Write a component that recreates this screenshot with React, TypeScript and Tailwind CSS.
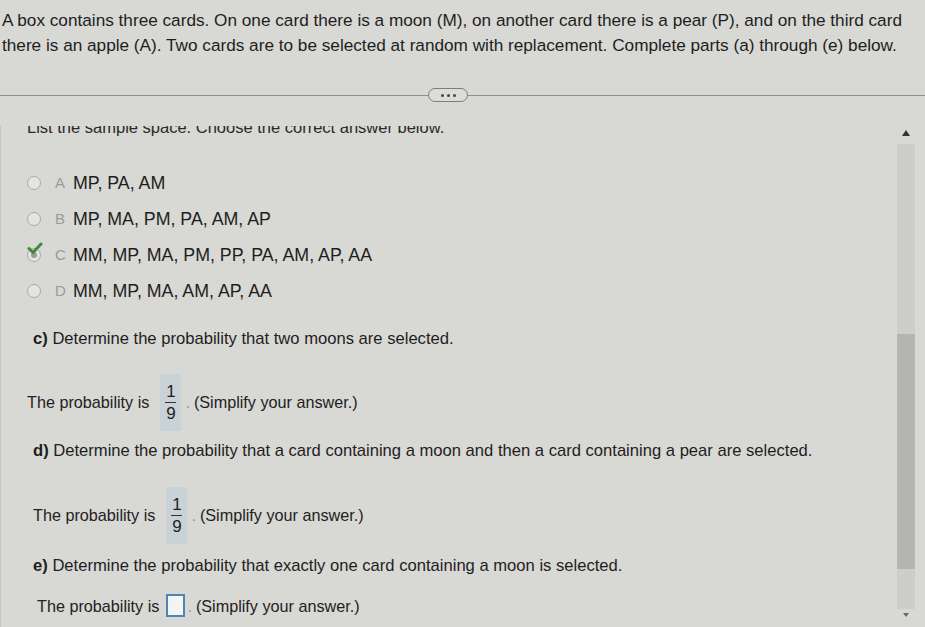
const OPTIONS = [
  { key: 'A', text: 'MP, PA, AM' },
  { key: 'B', text: 'MP, MA, PM, PA, AM, AP' },
  { key: 'C', text: 'MM, MP, MA, PM, PP, PA, AM, AP, AA', correct: true },
  { key: 'D', text: 'MM, MP, MA, AM, AP, AA' },
];

function Radio({ checked }: { checked?: boolean }) {
  return (
    <span className="relative inline-flex h-[14px] w-[14px] shrink-0 items-center justify-center rounded-full border border-[#a9a9a6] bg-[#e4e4e0]">
      {checked && <span className="h-[6px] w-[6px] rounded-full bg-[#9a9a97]" />}
      {checked && (
        <svg className="absolute -left-[1px] -top-[7px]" width="16" height="14" viewBox="0 0 16 14">
          <path d="M2 6.5 L6 10.5 L14 2" fill="none" stroke="#3f8a3a" strokeWidth="3" strokeLinecap="round" strokeLinejoin="round" />
        </svg>
      )}
    </span>
  );
}

function Fraction({ num, den }: { num: string; den: string }) {
  return (
    <span className="ml-[11px] mr-[4px] inline-flex w-[21px] flex-col items-center bg-[#c9d2d6] py-[7px] text-[17px] leading-[21px]">
      <span>{num}</span>
      <span className="h-px w-[11px] bg-[#333]" />
      <span>{den}</span>
    </span>
  );
}

function Probability({ children }: { children: React.ReactNode }) {
  return (
    <div className="flex items-center text-[16.2px] text-[#222]">
      <span>The probability is</span>
      {children}
      <span className="text-[#999]">.</span>
      <span className="ml-[4px]">(Simplify your answer.)</span>
    </div>
  );
}

export default function App() {
  return (
    <div className="flex h-[627px] w-[925px] flex-col overflow-hidden bg-[#d8d8d4] font-['Liberation_Sans',Arial,sans-serif] text-[#1e1e1e]">
      <div className="px-[2px] pt-[8px] text-[17.2px] leading-[25px]">
        <p>
          A box contains three cards. On one card there is a moon (M), on another card there is a pear (P), and on the third card
          <br />
          there is an apple (A). Two cards are to be selected at random with replacement. Complete parts (a) through (e) below.
        </p>
      </div>

      <div className="relative mt-[37px] h-px bg-[#8e8e8b]">
        <span className="absolute left-[428px] top-[-7px] flex h-[14px] w-[40px] items-center justify-center gap-[3px] rounded-full border border-[#7d7d7a] bg-[#dcdcd8]">
          <span className="h-[3px] w-[3px] rounded-full bg-[#444]" />
          <span className="h-[3px] w-[3px] rounded-full bg-[#444]" />
          <span className="h-[3px] w-[3px] rounded-full bg-[#444]" />
        </span>
      </div>

      <div className="mt-[30px] flex min-h-0 flex-1 overflow-hidden">
        <div className="flex-1 border-l border-[#c4c4c0] pl-[26px]">
          <p className="-mt-[9px] text-[16.5px] leading-[20px] text-[#2a2a2a]">List the sample space. Choose the correct answer below.</p>

          <div className="mt-[36px] flex flex-col gap-[16px]">
            {OPTIONS.map((o) => (
              <div key={o.key} className="flex items-center text-[17.8px] leading-[20px]">
                <Radio checked={o.correct} />
                <span className="ml-[14px] w-[12px] text-[15px] text-[#9b9b98]">{o.key}</span>
                <span className="ml-[6px]">{o.text}</span>
              </div>
            ))}
          </div>

          <p className="mt-[26px] ml-[6px] text-[16.6px]">
            <b>c)</b> Determine the probability that two moons are selected.
          </p>
          <div className="mt-[22px]">
            <Probability>
              <Fraction num="1" den="9" />
            </Probability>
          </div>

          <p className="mt-[8px] ml-[6px] text-[16.6px]">
            <b>d)</b> Determine the probability that a card containing a moon and then a card containing a pear are selected.
          </p>
          <div className="mt-[23px] ml-[6px]">
            <Probability>
              <Fraction num="1" den="9" />
            </Probability>
          </div>

          <p className="mt-[10px] ml-[6px] text-[16.6px]">
            <b>e)</b> Determine the probability that exactly one card containing a moon is selected.
          </p>
          <div className="mt-[15px] ml-[10px]">
            <Probability>
              <span className="ml-[7px] mr-[2px] inline-block h-[23px] w-[19px] border-2 border-[#4b86b8] bg-[#f4f4f2]" />
            </Probability>
          </div>
        </div>

        <div className="mr-[9px] flex w-[20px] flex-col items-center">
          <svg className="mt-[4px]" width="8" height="6" viewBox="0 0 8 6">
            <path d="M0 6 L4 0 L8 6 Z" fill="#333" />
          </svg>
          <div className="mt-[8px] flex w-[18px] flex-1 flex-col bg-[#cdcdc9]">
            <div className="h-[190px]" />
            <div className="h-[235px] bg-[#b4b4b1]" />
          </div>
          <svg className="mb-[10px] mt-[4px]" width="6" height="4" viewBox="0 0 6 4">
            <path d="M0 0 L6 0 L3 4 Z" fill="#666" />
          </svg>
        </div>
      </div>
    </div>
  );
}
